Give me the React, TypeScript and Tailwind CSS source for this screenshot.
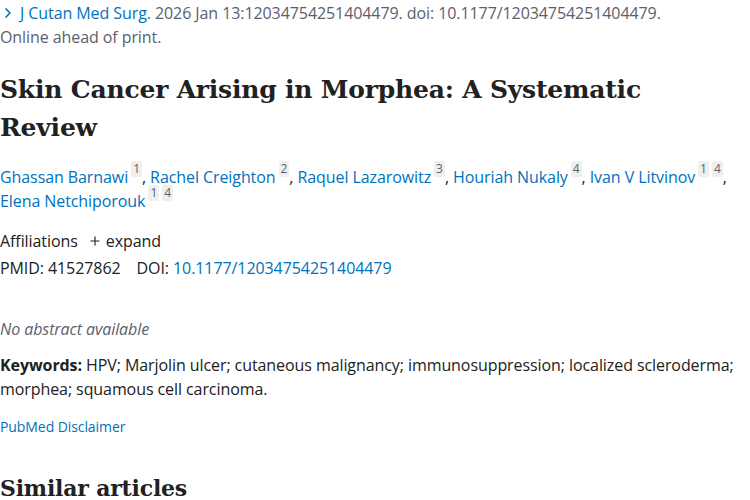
import { ChevronRight, Plus } from 'lucide-react';

const authors = [
  { name: 'Ghassan Barnawi', refs: ['1'] },
  { name: 'Rachel Creighton', refs: ['2'] },
  { name: 'Raquel Lazarowitz', refs: ['3'] },
  { name: 'Houriah Nukaly', refs: ['4'] },
  { name: 'Ivan V Litvinov', refs: ['1', '4'] },
  { name: 'Elena Netchiporouk', refs: ['1', '4'] },
];

const sans = "font-['Segoe_UI','Open_Sans',sans-serif]";
const serif = "font-['DejaVu_Serif',serif]";

function Ref({ n }: { n: string }) {
  return (
    <sup className="ml-[3px] inline-block rounded-[2px] bg-[#efefef] px-[2px] text-[12px] leading-[16px] text-[#5b616b] align-[4px]">
      {n}
    </sup>
  );
}

export default function App() {
  return (
    <div className={`min-h-[500px] w-[750px] overflow-hidden bg-white pt-[1px] ${sans} text-[16px] tracking-[-0.08px] text-[#212121]`}>
      <div className="leading-[24px] text-[#5b616b]">
        <ChevronRight className="mr-[4px] inline-block h-[16px] w-[16px] align-[-2px] text-[#0071bc]" strokeWidth={2.5} />
        <span className="text-[#0071bc]">J Cutan Med Surg.</span> 2026 Jan 13:12034754251404479. doi: 10.1177/12034754251404479.
        <br />
        Online ahead of print.
      </div>

      <h1 className={`mt-[22px] max-w-[670px] ${serif} text-[25px] font-bold leading-[38px] tracking-[-0.2px] text-[#212121]`}>
        Skin Cancer Arising in Morphea: A Systematic Review
      </h1>

      <div className="mt-[18px] leading-[24px] text-[#0071bc]">
        {authors.map((a, i) => (
          <span key={a.name}>
            <span className="whitespace-nowrap">
              {a.name}
              {a.refs.map((r) => (
                <Ref key={r} n={r} />
              ))}
              {i < authors.length - 1 && <span className="text-[#212121]">,</span>}
            </span>{' '}
          </span>
        ))}
      </div>

      <div className="mt-[16px] flex items-center leading-[24px]">
        <span>Affiliations</span>
        <Plus className="ml-[10px] mr-[4px] h-[14px] w-[14px] text-[#212121]" strokeWidth={2} />
        <span>expand</span>
      </div>
      <div className="mt-[3px] leading-[24px]">
        PMID: 41527862<span className="ml-[16px]">DOI: </span>
        <span className="text-[#0071bc]">10.1177/12034754251404479</span>
      </div>

      <p className="mt-[37px] italic leading-[24px] text-[#5b616b]">No abstract available</p>

      <p className="mt-[12px] leading-[24px]">
        <strong className="font-bold">Keywords:</strong> HPV; Marjolin ulcer; cutaneous malignancy; immunosuppression; localized scleroderma; morphea; squamous cell carcinoma.
      </p>

      <p className="mt-[16px] text-[14px] leading-[20px] text-[#0071bc]">PubMed Disclaimer</p>

      <h2 className={`mt-[36px] ${serif} text-[22px] font-bold leading-[30px] tracking-[-0.2px]`}>Similar articles</h2>
    </div>
  );
}
